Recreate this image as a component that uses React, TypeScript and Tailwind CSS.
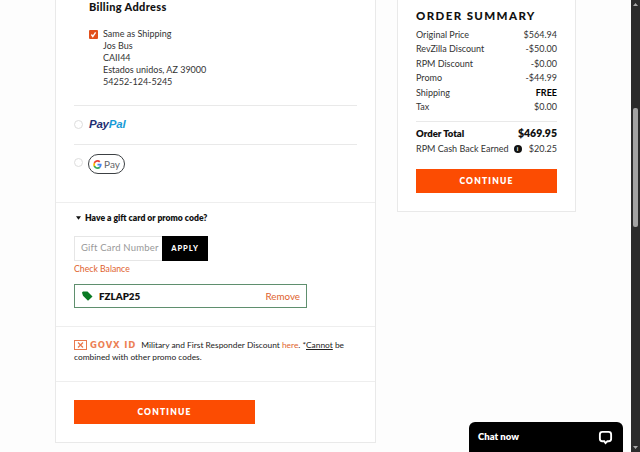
import React from "react";

const font = { fontFamily: '"Lato", "Liberation Sans", sans-serif' };

function SummaryRow({ label, value, bold }: { label: string; value: string; bold?: boolean }) {
  return (
    <div className="flex justify-between h-[14.5px] items-center text-[9px] text-[#333] whitespace-nowrap">
      <span>{label}</span>
      <span className={bold ? "font-bold text-black" : ""}>{value}</span>
    </div>
  );
}

function Continue({ className }: { className: string }) {
  return (
    <button className={`bg-[#fc4c02] text-white font-extrabold text-[8.5px] tracking-[0.14em] flex items-center justify-center ${className}`}>
      CONTINUE
    </button>
  );
}

function Radio({ className }: { className?: string }) {
  return <span className={`w-[9px] h-[9px] rounded-full border border-[#ddd] bg-white shrink-0 ${className ?? ""}`} />;
}

export default function App() {
  return (
    <div style={font} className="relative w-[640px] h-[452px] overflow-hidden bg-[#fdfdfd] flex text-[#222]">
      <div className="flex-1 flex items-start pl-[55px] gap-[21px]">
        <div className="w-[321px] bg-white border-x border-b border-[#e9e9e9] flex flex-col">
          <section className="h-[203px] px-[18px] flex flex-col border-b border-[#eee]">
            <h2 className="pl-[15px] h-[14px] leading-[14px] text-[11px] font-black tracking-[0.03em] text-[#111] whitespace-nowrap">Billing Address</h2>
            <div className="flex mt-[14px] pl-[15px] h-[70px]">
              <span className="w-[9px] h-[9px] mt-[2px] rounded-[1px] bg-[#e2501c] flex items-center justify-center shrink-0">
                <svg width="7" height="7" viewBox="0 0 10 10" fill="none" stroke="#fff" strokeWidth="2"><path d="M2 5l2 3 4-6" /></svg>
              </span>
              <div className="ml-[5px] text-[9px] leading-[12px] text-[#333] whitespace-nowrap">
                <div>Same as Shipping</div>
                <div>Jos Bus</div>
                <div>CAII44</div>
                <div>Estados unidos, AZ 39000</div>
                <div>54252-124-5245</div>
              </div>
            </div>
            <div className="border-t border-[#e9e9e9] h-[39px] flex items-center gap-[6px] mt-[7px]">
              <Radio className="-mt-[2px]" />
              <span className="text-[11.5px] italic font-bold tracking-[-0.02em]" style={{ fontFamily: '"Liberation Sans", sans-serif' }}>
                <span className="text-[#1f2f72]">Pay</span>
                <span className="text-[#179bd7]">Pal</span>
              </span>
            </div>
            <div className="border-t border-[#e9e9e9] h-[39px] flex items-center gap-[5px]">
              <Radio className="-mt-[3px]" />
              <span className="w-[37px] h-[20px] rounded-full border border-[#3c4043] flex items-center justify-center gap-[2px] text-[10px] text-[#5f6368]">
                <svg width="9" height="9" viewBox="0 0 24 24">
                  <path fill="#4285F4" d="M23 12.3c0-.8-.1-1.600-.2-2.300H12v4.400h6.200c-.3 1.400-1.100 2.600-2.300 3.400v2.800h3.700c2.200-2 3.400-5 3.400-8.300z" />
                  <path fill="#34A853" d="M12 24c3.100 0 5.700-1 7.600-2.800l-3.700-2.900c-1 .7-2.300 1.100-3.900 1.100-3 0-5.500-2-6.400-4.700H1.800v2.900C3.700 21.400 7.600 24 12 24z" />
                  <path fill="#FBBC05" d="M5.600 14.700c-.5-1.400-.5-3 0-4.400V7.400H1.800c-1.600 3.100-1.600 6.800 0 10.200z" />
                  <path fill="#EA4335" d="M12 4.800c1.700 0 3.200.6 4.400 1.700l3.300-3.300C17.700 1.200 15.100 0 12 0 7.600 0 3.700 2.600 1.800 6.500l3.800 2.900C6.500 6.800 9 4.800 12 4.800z" />
                </svg>
                Pay
              </span>
            </div>
          </section>
          <section className="h-[124px] px-[18px] border-b border-[#eee]">
            <div className="mt-[9px] flex items-center h-[12px] text-[8.6px] font-extrabold text-[#111] whitespace-nowrap">
              <svg width="5" height="4" viewBox="0 0 6 4" className="ml-[2px] mr-[4px]"><path d="M0 0h6L3 4z" fill="#111" /></svg>
              Have a gift card or promo code?
            </div>
            <div className="flex mt-[12px] h-[25px]">
              <div className="w-[88px] border border-[#e6e6e6] border-r-0 flex items-center pl-[6px] text-[9.5px] text-[#999] tracking-[0.02em] whitespace-nowrap">Gift Card Number</div>
              <button className="w-[46px] bg-black text-white text-[7.5px] font-black tracking-[0.13em]">APPLY</button>
            </div>
            <div className="mt-[2px] h-[12px] leading-[12px] text-[8.7px] text-[#e0622e]">Check Balance</div>
            <div className="mt-[9px] w-[233px] h-[24px] border border-[#5f8f6e] flex items-center pl-[7px] pr-[6px]">
              <svg width="11" height="10" viewBox="0 0 11 10"><path d="M0 1.500 L1 0.500 L5.500 0.500 L10.500 5.500 L6 9.800 L1 4.800z" fill="#0a7a24" /></svg>
              <span className="ml-[6px] text-[9.8px] font-extrabold text-[#111]">FZLAP25</span>
              <span className="ml-auto text-[9.8px] text-[#e0622e]">Remove</span>
            </div>
          </section>
          <section className="h-[55px] px-[18px] pt-[12px] border-b border-[#eee] text-[8.4px] leading-[12px] text-[#222]">
            <span className="inline-flex items-center align-middle mr-[5px] gap-[3px] -mt-[2px]">
              <svg width="13" height="10" viewBox="0 0 13 10"><rect x=".5" y=".5" width="12" height="9" fill="none" stroke="#e9794e" /><path d="M4 2.500l5 5M9 2.500l-5 5" stroke="#e9794e" strokeWidth="1.300" /></svg>
              <span className="text-[8.5px] font-bold tracking-[0.1em] text-[#ec7f55] leading-[10px] whitespace-nowrap" style={{ fontFamily: '"DejaVu Sans", sans-serif' }}>GOVX ID</span>
            </span>
            Military and First Responder Discount <span className="text-[#e0622e]">here</span>. *<span className="underline">Cannot</span> be<br />combined with other promo codes.
          </section>
          <section className="h-[60px] px-[18px] pt-[18px]">
            <Continue className="w-[181px] h-[24px]" />
          </section>
        </div>
        <div className="w-[179px] h-[212px] bg-white border-x border-b border-[#e9e9e9] px-[18px] flex flex-col">
          <h2 className="mt-[8px] h-[15px] leading-[15px] text-[11.5px] font-black tracking-[0.12em] text-[#111] whitespace-nowrap">ORDER SUMMARY</h2>
          <div className="mt-[4px] flex flex-col">
            <SummaryRow label="Original Price" value="$564.94" />
            <SummaryRow label="RevZilla Discount" value="-$50.00" />
            <SummaryRow label="RPM Discount" value="-$0.00" />
            <SummaryRow label="Promo" value="-$44.99" />
            <SummaryRow label="Shipping" value="FREE" bold />
            <SummaryRow label="Tax" value="$0.00" />
          </div>
          <div className="border-t border-[#e9e9e9] mt-[7px] pt-[5px]">
            <div className="flex justify-between items-center h-[14px] font-extrabold text-[#111] whitespace-nowrap">
              <span className="text-[9.5px]">Order Total</span>
              <span className="text-[10.5px]">$469.95</span>
            </div>
            <div className="flex justify-between items-center h-[15px] text-[9px] text-[#333] whitespace-nowrap">
              <span className="flex items-center gap-[5px]">
                RPM Cash Back Earned
                <span className="w-[8px] h-[8px] rounded-full bg-[#111] text-white text-[6px] font-bold flex items-center justify-center">i</span>
              </span>
              <span>$20.25</span>
            </div>
          </div>
          <Continue className="w-full h-[24px] mt-[13px]" />
        </div>
      </div>
      <div className="w-[9px] h-full bg-[#2c2c2c] flex flex-col items-center pt-[3px] pb-[3px]">
        <svg width="5" height="3" viewBox="0 0 5 3" className="shrink-0"><path d="M0 3h5L2.500 0z" fill="#aaa" /></svg>
        <div className="mt-[102px] w-[5px] h-[119px] rounded-[2px] bg-[#a3a3a3] shrink-0" />
        <div className="flex-1" />
        <svg width="5" height="3" viewBox="0 0 5 3" className="shrink-0"><path d="M0 0h5L2.500 3z" fill="#aaa" /></svg>
      </div>
      <div className="absolute right-[17px] bottom-0 w-[154px] h-[30px] bg-black rounded-t-[6px] flex items-center justify-between pl-[9px] pr-[10px] text-white text-[9.5px] font-extrabold">
        Chat now
        <svg width="15" height="15" viewBox="0 0 24 24" fill="none" stroke="#fff" strokeWidth="3"><path d="M7 3h10a4 4 0 0 1 4 4v7a4 4 0 0 1-4 4h-2l-3 3-2-3H7a4 4 0 0 1-4-4V7a4 4 0 0 1 4-4z" /></svg>
      </div>
    </div>
  );
}
